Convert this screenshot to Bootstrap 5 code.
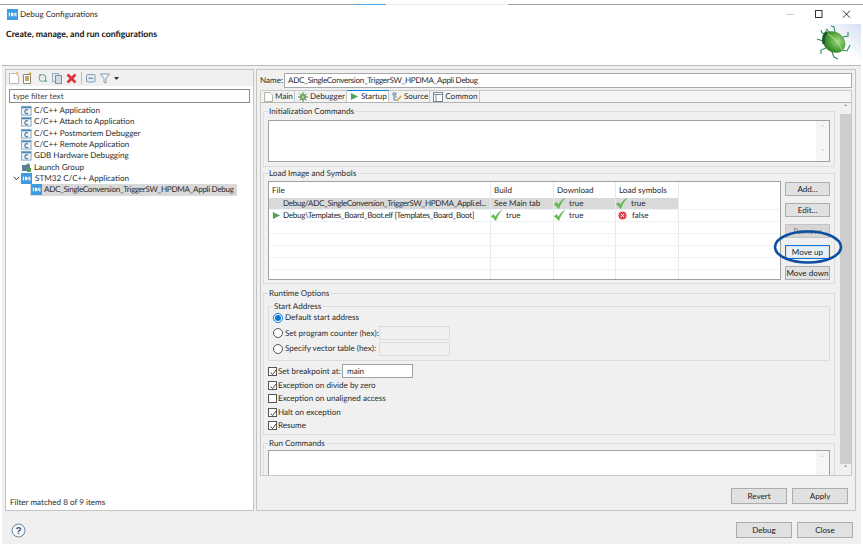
<!doctype html>
<html lang="en"><head><meta charset="utf-8"><title>Debug Configurations</title>
<link href="https://cdn.jsdelivr.net/npm/bootstrap@5.3.0/dist/css/bootstrap.min.css" rel="stylesheet">
<style>
html,body{margin:0;height:551px;overflow:hidden;background:#fff}
body{font:8.1px/11px Lato,"Open Sans",sans-serif;color:#2c2c2c;text-rendering:geometricPrecision}
svg{display:block;flex:none}
.nar{letter-spacing:-.31px}
.dlg{width:863px;height:551px;padding:4px 2px 7px 2px;display:flex;flex-direction:column}
.topln{height:1px;display:flex;margin:0 -2px;flex:none;background:#a0a0a0}
.s1{width:356px}.s2{width:30px;background:#4aa3e8}.s3{width:122px;background:#ececec}
.tbar{height:60px;background:#fff;position:relative;flex:none;margin:0 -2px;padding:0 2px}
.ttl{height:19px;padding-left:5px;gap:2px}
.sub{font-weight:700;color:#111;padding:4px 0 0 4px;font-size:8.7px}
.wc{position:absolute;top:5px;right:12px;gap:19px}
.beetle{position:absolute;right:2px;top:19px}
.main{flex:1;background:#f0f0f0;border-top:1px solid #b8b8b8;display:flex;flex-direction:column;padding:3px 5px 0 3px;min-height:0}
.panes{display:flex;gap:2px;height:442px;flex:none}
.lp{width:249px;background:#fff;border:1px solid #c4c4c4;display:flex;flex-direction:column;flex:none}
.tool{height:16px;background:#f0f0f0;padding:0 0 0 3px;gap:4px;flex:none}
.sep{width:1px;height:12px;background:#bbb}
.flt{margin:3px 3px 2px 3px;height:14px;border:1px solid #8a8a8a;padding:0 3px;line-height:12px;color:#444;background:#fff;flex:none}
.tree{flex:1;padding-left:0}
.tn{height:11.3px;gap:2px;padding-left:15px;white-space:nowrap;line-height:11px}
.tn.ex{padding-left:7px;gap:1px}
.tn.ex span{padding-left:2px}
.tn.ch{padding-left:24px}
.tn.ch .hl{background:#d9d9d9;padding:0 3px 0 1px;display:flex;gap:2px;align-items:center;height:12px}
.fm{padding:0 0 2px 4px;flex:none}
.rp{flex:1;border:1px solid #c4c4c4;background:#f0f0f0;padding:3px 3px 0 3px;min-width:0;display:flex;flex-direction:column}
.nm{gap:3px;height:15px;flex:none}
.nml{width:21px}
.nmi{flex:1;height:15px;background:#fff;border:1px solid #a8a8a8;line-height:13px;padding-left:3px}
.tabs{height:13px;margin-top:2px;border:1px solid #c8c8c8;border-bottom:1px solid #b4b4b4;flex:none;display:flex;background:#f5f5f5;border-radius:2px 2px 0 0}
.tb{padding:0 1px 0 3px;border-right:1px solid #c8c8c8;gap:2px;line-height:11px;background:#f2f2f2}
.tb.on{background:#fff;border-top:1px solid #0a84d6;margin-top:-1px}
.fold{height:373px;border:1px solid #c8c8c8;border-top:0;display:flex;overflow:hidden;flex:none}
.sc{flex:1;padding:8px 5px 0 2px;min-width:0;height:373px;position:relative;z-index:1}
.sb{width:11px;background:#cdcdcd;flex:none;display:flex;flex-direction:column;justify-content:space-between}
.sb b{display:block;height:11px;background:#f0f0f0;font:700 7px/10px "DejaVu Sans",sans-serif;text-align:center;color:#555}
.gp{border:1px solid #dcdcdc;position:relative;padding:0 4px;margin-bottom:7px}
.gt{position:absolute;top:-6px;left:4px;background:#f0f0f0;padding:0 1px;line-height:11px;white-space:nowrap}
.ta{height:42px;background:#fff;border:1px solid #a0a0a0;display:flex;justify-content:flex-end}
.sv{width:13px;background:#f5f5f5;font:7px/10px "DejaVu Sans",sans-serif;color:#aaa;text-align:center;display:flex;flex-direction:column;justify-content:space-between;padding:3px 0}
.g1{height:56px;padding-top:8px;margin-bottom:6px}
.g2{height:111px;padding-top:7px;display:flex;gap:4px;margin-bottom:9px}
.tw{width:513px;height:99px;background:#fff;border:1px solid #a0a0a0;flex:none;overflow:hidden}
.tr{display:flex;height:12px;border-bottom:1px solid #eef3f8}
.tr.hd{height:16px;border-bottom:0}
.tr.sel .cc{background:#d9d9d9}
.tr.sel .c4{background:#fff}
.cc{border-right:1px solid #e4eaf0;padding-left:3px;display:flex;align-items:center;gap:2px;white-space:nowrap;overflow:hidden;flex:none}
.cc.ci{padding-left:0;gap:4px}
.xi{margin:0 1px 0 2px}
.c0{width:222px}.c1{width:63px}.c2{width:62px}.c3{width:63px}
.c4{flex:1;border-right:0;padding:0}
.fi{padding-left:14px}
.bc{width:46px;display:flex;flex-direction:column;gap:7px;padding-top:1px;position:relative}
.eb{height:14px;background:#e1e1e1;border:1px solid #adadad;text-align:center;font:8.1px/12px Lato,sans-serif;color:#222;padding:0;border-radius:0;white-space:nowrap}
.eb:disabled{color:#808080;background:#d6d6d6;border-color:#c4c4c4;opacity:1}
.eb.foc{border:1px solid #0a78d7;box-shadow:inset 0 0 0 1px #e1e1e1;background:#e5f1fb}
.ring{position:absolute;left:-12px;top:49px;overflow:visible}
.g3{height:142px;padding-top:12px;margin-bottom:8px}
.ga{height:55px;padding:3px 0 0 0;margin-bottom:3px}
.g4{height:56px;padding-top:6px;margin-bottom:6px}
.rad{height:15.5px;gap:2px;padding-left:4px}
.rb{width:10px;height:10px;border:1px solid #555;border-radius:50%;background:#fff;flex:none;display:flex;align-items:center;justify-content:center}
.rb.on{border-color:#0a78d7}
.rb.on::after{content:"";width:6px;height:6px;border-radius:50%;background:#0a78d7}
.rl{width:92px;flex:none;white-space:nowrap}
.dis{width:71px;height:14px;background:#f0f0f0;border:1px solid #dcdcdc}
.chk{height:13.5px;gap:1px}
.chk.first{height:14.5px}
.cb{width:9px;height:9px;border:1px solid #555;background:#fff;flex:none;font-size:0}
.bl{width:63px;flex:none;white-space:nowrap}
.mi{width:71px;height:14px;background:#fff;border:1px solid #a0a0a0;line-height:12px;padding-left:4px}
.ra{height:35px;display:flex;justify-content:flex-end;gap:5px;align-items:center;padding:5px 4px 0 0;flex:1}
.rb2{width:56px;height:16px}
.ft{flex:1;position:relative;display:flex;justify-content:space-between;align-items:center;padding:5px 3px 0 6px}
.ftb{display:flex;gap:5px}
</style></head><body>
<svg width="0" height="0" class="position-absolute"><defs>
<symbol id="cf" viewBox="0 0 12 12"><rect x=".5" y="1.5" width="10.5" height="9.5" fill="#eef3f8" stroke="#7fa2bd"/><rect x="1" y="2" width="10" height="1.6" fill="#4c86b4"/><path d="M7.5 5.6A2.1 2.1 0 1 0 7.5 9" fill="none" stroke="#41729a" stroke-width="1.2"/></symbol>
<symbol id="ide" viewBox="0 0 12 12"><rect width="12" height="12" fill="#3d9be0"/><rect x="2" y="4" width="1.3" height="4" fill="#fff"/><path d="M4.3 4h1.6q1.2 0 1.2 2t-1.2 2H4.3z" fill="#fff"/><path d="M8 4h2.6v1H9v.6h1.4v.9H9V7h1.7v1H8z" fill="#fff"/></symbol>
<symbol id="ok" viewBox="0 0 12 12"><path d="M.3 6.800 2.800 4.800l2.100 2.800C6.400 4.800 8.500 2.100 11.800.3 9 3.300 6.800 7 5.200 11.700 3.600 9.500 2 8 .3 6.800z" fill="#62bf4b" stroke="#3f9a38" stroke-width=".4"/></symbol>
<symbol id="play" viewBox="0 0 10 10"><path d="M1 1l8 4-8 4z" fill="#4fa35a"/></symbol>
<symbol id="ck" viewBox="0 0 9 9"><path d="M1.700 4.600 3.600 6.600 7.400 1.600" fill="none" stroke="#444" stroke-width="1"/></symbol>
</defs></svg>
<div class="dlg">
 <div class="topln"><span class="s1"></span><span class="s2"></span><span class="s3"></span></div>
 <div class="tbar">
  <div class="ttl d-flex align-items-center"><svg width="11" height="11"><use href="#ide"/></svg><span>Debug Configurations</span></div>
  <div class="sub">Create, manage, and run configurations</div>
  <div class="wc d-flex align-items-center">
   <svg width="9" height="9"><path d="M0 4.500h8" stroke="#ccc"/></svg>
   <svg width="9" height="9"><rect x="1.500" y=".5" width="6.500" height="7" fill="none" stroke="#333"/></svg>
   <svg width="9" height="9"><path d="M1 .7l7 7M8 .7l-7 7" stroke="#333"/></svg>
  </div>
  <svg class="beetle" width="46" height="41" viewBox="0 0 46 41">
   <defs><linearGradient id="bgd" x1="0" y1="1" x2="1" y2="0"><stop offset=".5" stop-color="#fff"/><stop offset="1" stop-color="#d3dff2"/></linearGradient>
   <radialGradient id="shell" cx=".62" cy=".35" r=".7"><stop offset="0" stop-color="#a8d98a"/><stop offset=".55" stop-color="#52a53a"/><stop offset="1" stop-color="#23752b"/></radialGradient></defs>
   <rect width="46" height="41" fill="url(#bgd)"/>
   <g fill="none" stroke="#2f8a60" stroke-width="1.100"><path d="M11 10 7 9 6 6M8 17 2 15M11 24 6 26 6 30M17 28 19 33 23 35M27 26 32 27 35 21M28 13 33 12 33 8M20 8 19 3 16 2M15 9 11 5"/></g>
   <ellipse cx="19" cy="18" rx="12" ry="10" fill="url(#shell)" transform="rotate(35 19 18)"/>
   <path d="M12 8Q7 12 9 20" fill="none" stroke="#1d5c2c" stroke-width="3"/>
   <path d="M13 10Q22 15 27 26" fill="none" stroke="#c8e8b0" stroke-width=".8"/>
  </svg>
 </div>
 <div class="main">
  <div class="panes">
   <div class="lp">
    <div class="tool d-flex align-items-center">
     <svg width="10" height="12" viewBox="0 0 10 12"><path d="M.5 1.500h6l3 3v7h-9z" fill="#fff" stroke="#b9b9a4"/><path d="M7 1 8 0 8.600 1.600 10 2" stroke="#e4b43b" fill="none"/></svg>
     <svg width="10" height="12" viewBox="0 0 10 12"><path d="M.5 2.500h7v9h-7z" fill="#fff" stroke="#8a8a78"/><rect x="2" y="4" width="4" height="5" fill="#c9a86a"/><path d="M7 0v3M5.500 1.500h3" stroke="#dba72e"/></svg>
     <svg width="11" height="12" viewBox="0 0 11 12"><circle cx="5.500" cy="6" r="3.500" fill="#e5ecf0" stroke="#75a088"/><path d="M2 3h2M8 9h2" stroke="#68b06a" stroke-width="1.400"/></svg>
     <svg width="10" height="12" viewBox="0 0 10 12"><rect x=".5" y="1.500" width="6" height="8" fill="#e8eef2" stroke="#9aa9b5"/><rect x="3.500" y="3.500" width="6" height="8" fill="#cfdbe5" stroke="#7d90a0"/></svg>
     <svg width="11" height="11" viewBox="0 0 11 11"><path d="M1.500 1.500l8 8M9.500 1.500l-8 8" stroke="#d9323a" stroke-width="2.600"/></svg>
     <span class="sep"></span>
     <svg width="10" height="10" viewBox="0 0 10 10"><rect x=".5" y="1.500" width="8.500" height="7.500" rx="1" fill="#e4eaf0" stroke="#7f9bb3"/><path d="M2.500 5.200h4.500" stroke="#4c78a0"/></svg>
     <svg width="10" height="11" viewBox="0 0 10 11"><path d="M.5 1h9L6 5.500V10L4 9V5.500z" fill="#f2f6fa" stroke="#7f9bb3"/></svg>
     <svg width="5" height="3" viewBox="0 0 5 3"><path d="M0 0h5L2.500 3z" fill="#333"/></svg>
    </div>
    <div class="flt">type filter text</div>
    <div class="tree">
     <div class="tn d-flex align-items-center"><svg width="11" height="11"><use href="#cf"/></svg>C/C++ Application</div>
     <div class="tn d-flex align-items-center"><svg width="11" height="11"><use href="#cf"/></svg>C/C++ Attach to Application</div>
     <div class="tn d-flex align-items-center"><svg width="11" height="11"><use href="#cf"/></svg>C/C++ Postmortem Debugger</div>
     <div class="tn d-flex align-items-center"><svg width="11" height="11"><use href="#cf"/></svg>C/C++ Remote Application</div>
     <div class="tn d-flex align-items-center"><svg width="11" height="11"><use href="#cf"/></svg>GDB Hardware Debugging</div>
     <div class="tn d-flex align-items-center"><svg width="11" height="11" viewBox="0 0 11 11"><rect x="1" y="3" width="8" height="6" fill="#5d7f95"/><path d="M5 3l2-2 2 2zM6 6h4v4H6z" fill="#4e9e57"/></svg>Launch Group</div>
     <div class="tn ex d-flex align-items-center"><svg width="7" height="5" viewBox="0 0 7 5"><path d="M.8.8 3.500 3.800 6.200.8" fill="none" stroke="#333"/></svg><svg width="11" height="11"><use href="#ide"/></svg><span>STM32 C/C++ Application</span></div>
     <div class="tn ch d-flex align-items-center"><span class="hl"><svg width="11" height="11"><use href="#ide"/></svg><span class="nar">ADC_SingleConversion_TriggerSW_HPDMA_Appli Debug</span></span></div>
    </div>
    <div class="fm">Filter matched 8 of 9 items</div>
   </div>
   <div class="rp">
    <div class="nm d-flex align-items-center"><span class="nml">Name:</span><div class="nmi nar">ADC_SingleConversion_TriggerSW_HPDMA_Appli Debug</div></div>
    <div class="tabs">
     <div class="tb d-flex align-items-center"><svg width="9" height="10" viewBox="0 0 9 10"><path d="M.5.500h5.500l2.500 2.500v6.500h-8z" fill="#fff" stroke="#b9b09a"/></svg>Main</div>
     <div class="tb d-flex align-items-center"><svg width="10" height="10" viewBox="0 0 10 10"><path d="M5 0v10M0 5h10M1.500 1.500l7 7M8.500 1.500l-7 7" stroke="#4f8252"/><circle cx="5" cy="5" r="3" fill="#6c9e62"/><circle cx="5" cy="5" r="1.500" fill="#a8cf8e"/></svg>Debugger</div>
     <div class="tb on d-flex align-items-center"><svg width="9" height="9"><use href="#play"/></svg>Startup</div>
     <div class="tb d-flex align-items-center"><svg width="10" height="10" viewBox="0 0 10 10"><path d="M1 1h3v2H1zM2 3v5h3M2 5h3" fill="none" stroke="#5b8ab5"/><path d="M5 9l4-5" stroke="#d8a53c" stroke-width="1.500"/></svg>Source</div>
     <div class="tb d-flex align-items-center"><svg width="10" height="10" viewBox="0 0 10 10"><rect x=".5" y=".5" width="9" height="9" fill="#fff" stroke="#7c8a98"/><path d="M.5 2.500h9M3 2.500v7" stroke="#7c8a98"/></svg>Common</div>
    </div>
    <div class="fold">
     <div class="sc">
      <div class="gp g1"><span class="gt">Initialization Commands</span>
       <div class="ta"><div class="sv"><span>&#708;</span><span>&#709;</span></div></div>
      </div>
      <div class="gp g2"><span class="gt">Load Image and Symbols</span>
       <div class="tw">
        <div class="tr hd"><div class="cc c0">File</div><div class="cc c1">Build</div><div class="cc c2">Download</div><div class="cc c3">Load symbols</div><div class="cc c4"></div></div>
        <div class="tr sel"><div class="cc c0 fi nar">Debug/ADC_SingleConversion_TriggerSW_HPDMA_Appli.el...</div><div class="cc c1">See Main tab</div><div class="cc c2 ci"><svg width="11" height="11"><use href="#ok"/></svg>true</div><div class="cc c3 ci"><svg width="11" height="11"><use href="#ok"/></svg>true</div><div class="cc c4"></div></div>
        <div class="tr"><div class="cc c0 nar"><svg width="9" height="9"><use href="#play"/></svg>Debug\Templates_Board_Boot.elf [Templates_Board_Boot]</div><div class="cc c1 ci"><svg width="11" height="11"><use href="#ok"/></svg>true</div><div class="cc c2 ci"><svg width="11" height="11"><use href="#ok"/></svg>true</div><div class="cc c3 ci"><svg class="xi" width="9" height="9" viewBox="0 0 9 9"><circle cx="4.500" cy="4.500" r="4" fill="#e0464e"/><path d="M3 3l3 3M6 3 3 6" stroke="#fff"/></svg>false</div><div class="cc c4"></div></div>
        <div class="tr"><div class="cc c0"></div><div class="cc c1"></div><div class="cc c2"></div><div class="cc c3"></div></div>
        <div class="tr"><div class="cc c0"></div><div class="cc c1"></div><div class="cc c2"></div><div class="cc c3"></div></div>
        <div class="tr"><div class="cc c0"></div><div class="cc c1"></div><div class="cc c2"></div><div class="cc c3"></div></div>
        <div class="tr"><div class="cc c0"></div><div class="cc c1"></div><div class="cc c2"></div><div class="cc c3"></div></div>
        <div class="tr"><div class="cc c0"></div><div class="cc c1"></div><div class="cc c2"></div><div class="cc c3"></div></div>
       </div>
       <div class="bc">
        <button class="btn eb" type="button">Add...</button>
        <button class="btn eb" type="button">Edit...</button>
        <button class="btn eb" type="button" disabled>Remove</button>
        <button class="btn eb foc" type="button">Move up</button>
        <button class="btn eb" type="button">Move down</button>
        <svg class="ring" width="70" height="34" viewBox="0 0 70 34"><ellipse cx="35" cy="17" rx="33" ry="15.500" fill="none" stroke="#0b4ea2" stroke-width="2.600"/></svg>
       </div>
      </div>
      <div class="gp g3"><span class="gt">Runtime Options</span>
       <div class="gp ga"><span class="gt">Start Address</span>
        <div class="rad d-flex align-items-center"><span class="rb on"></span>Default start address</div>
        <div class="rad d-flex align-items-center"><span class="rb"></span><span class="rl">Set program counter (hex):</span><span class="dis"></span></div>
        <div class="rad d-flex align-items-center"><span class="rb"></span><span class="rl">Specify vector table (hex):</span><span class="dis"></span></div>
       </div>
       <div class="chk first d-flex align-items-center"><span class="cb"><svg width="9" height="9"><use href="#ck"/></svg></span><span class="bl">Set breakpoint at:</span><span class="mi">main</span></div>
       <div class="chk d-flex align-items-center"><span class="cb"><svg width="9" height="9"><use href="#ck"/></svg></span>Exception on divide by zero</div>
       <div class="chk d-flex align-items-center"><span class="cb"></span>Exception on unaligned access</div>
       <div class="chk d-flex align-items-center"><span class="cb"><svg width="9" height="9"><use href="#ck"/></svg></span>Halt on exception</div>
       <div class="chk d-flex align-items-center"><span class="cb"><svg width="9" height="9"><use href="#ck"/></svg></span>Resume</div>
      </div>
      <div class="gp g4"><span class="gt">Run Commands</span>
       <div class="ta"><div class="sv"><span>&#708;</span></div></div>
      </div>
     </div>
     <div class="sb"><b>&#708;</b><b>&#709;</b></div>
    </div>
    <div class="ra"><button class="btn eb rb2" type="button">Revert</button><button class="btn eb rb2" type="button">Apply</button></div>
   </div>
  </div>
  <div class="ft">
   <svg width="15" height="15" viewBox="0 0 15 15"><circle cx="7.500" cy="7.500" r="6.500" fill="#f4f6f9" stroke="#6f8398"/><text x="7.500" y="11" text-anchor="middle" font-family="Liberation Sans" font-weight="700" font-size="10" fill="#3c5a78">?</text></svg>
   <div class="ftb"><button class="btn eb rb2" type="button">Debug</button><button class="btn eb rb2" type="button">Close</button></div>
  </div>
 </div>
</div>
<script src="https://cdn.jsdelivr.net/npm/bootstrap@5.3.0/dist/js/bootstrap.bundle.min.js"></script>
</body></html>
